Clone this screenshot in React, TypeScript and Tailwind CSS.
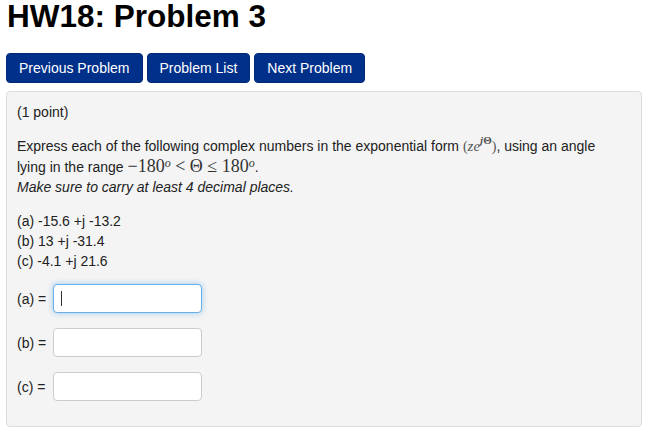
import React from "react";

const serif = { fontFamily: '"Liberation Serif", "DejaVu Serif", serif' };

function Field({ label, focused, first }: { label: string; focused?: boolean; first?: boolean }) {
  return (
    <div className={"flex items-center " + (first ? "mt-[13px]" : "mt-[15px]")}>
      <span className="w-[36px] shrink-0">{label}</span>
      <div className="relative">
        <input
          readOnly
          className={
            "block w-[149px] h-[29px] rounded-[4px] bg-white px-2 outline-none " +
            (focused
              ? "border border-[#66afe9] shadow-[0_0_6px_rgba(102,175,233,0.6)]"
              : "border border-[#cccccc]")
          }
        />
        {focused && (
          <span className="absolute left-[8px] top-[7px] w-px h-[15px] bg-[#333]" />
        )}
      </div>
    </div>
  );
}

export default function App() {
  return (
    <div
      className="w-[653px] h-[446px] bg-white px-[6px] text-[#222]"
      style={{ fontFamily: '"Liberation Sans", Arial, sans-serif' }}
    >
      <h1 className="text-[31.5px] leading-[32px] font-bold text-black pl-px">HW18: Problem 3</h1>
      <div className="flex gap-[4px] mt-[21px]">
        {["Previous Problem", "Problem List", "Next Problem"].map((t) => (
          <button
            key={t}
            className="h-[30px] px-[12px] rounded-[4px] bg-[#00308a] text-white text-[14px] border border-[#002a78]"
          >
            {t}
          </button>
        ))}
      </div>
      <div className="mt-[8px] w-[636px] border border-[#dddddd] rounded-[4px] bg-[#f4f4f4] px-[10px] pt-[10px] pb-[25px] text-[14px] leading-[20px]">
        <p>(1 point)</p>
        <p className="mt-[14px] pr-[28px]">
          Express each of the following complex numbers in the exponential form{" "}
          <span className="text-[#555]" style={serif}>
            (<i className="text-[15px]">ze</i>
            <span className="inline-block align-top leading-none text-[11px] font-bold relative top-[-1px]">
              <i>j</i>Θ
            </span>
            )
          </span>
          , using an angle lying in the range{" "}
          <span className="text-[18px] leading-[18px] text-[#333]" style={serif}>
            −180
            <span className="inline-block align-top leading-none text-[12px] italic">o</span> &lt; Θ ≤ 180
            <span className="inline-block align-top leading-none text-[12px] italic">o</span>
          </span>
          .
        </p>
        <p className="italic">Make sure to carry at least 4 decimal places.</p>
        <div className="mt-[14px]">
          <p>(a) -15.6 +j -13.2</p>
          <p>(b) 13 +j -31.4</p>
          <p>(c) -4.1 +j 21.6</p>
        </div>
        <Field label="(a) =" focused first />
        <Field label="(b) =" />
        <Field label="(c) =" />
      </div>
    </div>
  );
}
